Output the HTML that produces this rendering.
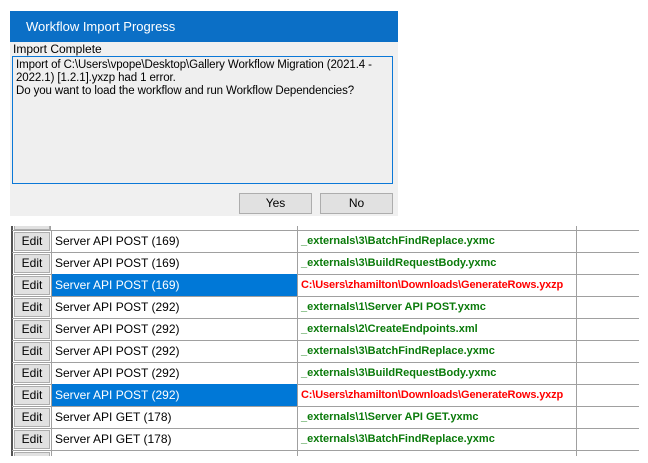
<!DOCTYPE html>
<html><head><style>
*{margin:0;padding:0;box-sizing:border-box}
body{width:648px;height:463px;background:#fff;position:relative;overflow:hidden;font-family:"Liberation Sans",sans-serif;font-size:12px;color:#000}
.a{position:absolute}
.dlg{left:10px;top:11px;width:388px;height:205px;background:#f0f0f0}
.title{left:10px;top:11px;width:388px;height:31px;background:#0b6fc6;color:#fff;font-size:13px;line-height:31px;padding-left:16px}
.ta{left:12px;top:56px;width:381px;height:128px;border:1px solid #0b78d7;background:#efefef;padding:2px 3px;line-height:13px;font-size:11.5px;white-space:nowrap;letter-spacing:-0.1px}
.btn{background:#e1e1e1;border:1px solid #adadad;text-align:center}
.row{left:12px;width:627px;height:22px}
.hl{position:absolute;left:0;right:0;height:1px;background:#a0a0a0}
.edit{position:absolute;left:2px;top:2px;width:36px;height:19px;background:#e1e1e1;border:1px solid #adadad;text-align:center;line-height:17px}
.c1{position:absolute;left:39px;top:0;width:246px;height:22px;line-height:23px;padding-left:3px;border-left:1px solid #a0a0a0}
.c2{position:absolute;left:285px;top:0;width:280px;height:22px;line-height:23px;padding-left:3px;border-left:1px solid #a0a0a0;font-weight:bold;color:#0a7a0a;font-size:11px;white-space:nowrap;overflow:hidden}
.c3{position:absolute;left:564px;top:0;width:1px;height:22px;background:#a0a0a0}
.sel{background:#0078d7;color:#fff}
.red{color:#f00;letter-spacing:-0.15px}
</style></head><body>
<div class="a dlg"></div>
<div class="a title">Workflow Import Progress</div>
<div class="a" style="left:13px;top:43px;line-height:13px">Import Complete</div>
<div class="a ta">Import of C:\Users\vpope\Desktop\Gallery Workflow Migration (2021.4 -<br>2022.1) [1.2.1].yxzp had 1 error.<br>Do you want to load the workflow and run Workflow Dependencies?</div>
<div class="a btn" style="left:239px;top:193px;width:73px;height:21px;line-height:19px">Yes</div>
<div class="a btn" style="left:320px;top:193px;width:73px;height:21px;line-height:19px">No</div>

<div class="a" style="left:11px;top:226px;width:2px;height:230px;background:#555"></div>
<div class="a" style="left:14px;top:226px;width:36px;height:4px;background:#e1e1e1;border:1px solid #adadad;border-top:none"></div>
<div class="a" style="left:50px;top:226px;width:1px;height:4px;background:#a0a0a0"></div>
<div class="a" style="left:297px;top:226px;width:1px;height:4px;background:#a0a0a0"></div>
<div class="a" style="left:576px;top:226px;width:1px;height:4px;background:#a0a0a0"></div>

<div class="a row" style="top:230px"><div class="hl" style="top:0"></div><div class="edit">Edit</div><div class="c1">Server API POST (169)</div><div class="c2">_externals\3\BatchFindReplace.yxmc</div><div class="c3"></div></div>
<div class="a row" style="top:252px"><div class="hl" style="top:0"></div><div class="edit">Edit</div><div class="c1">Server API POST (169)</div><div class="c2">_externals\3\BuildRequestBody.yxmc</div><div class="c3"></div></div>
<div class="a row" style="top:274px"><div class="hl" style="top:0"></div><div class="edit">Edit</div><div class="c1 sel">Server API POST (169)</div><div class="c2 red">C:\Users\zhamilton\Downloads\GenerateRows.yxzp</div><div class="c3"></div></div>
<div class="a row" style="top:296px"><div class="hl" style="top:0"></div><div class="edit">Edit</div><div class="c1">Server API POST (292)</div><div class="c2">_externals\1\Server API POST.yxmc</div><div class="c3"></div></div>
<div class="a row" style="top:318px"><div class="hl" style="top:0"></div><div class="edit">Edit</div><div class="c1">Server API POST (292)</div><div class="c2">_externals\2\CreateEndpoints.xml</div><div class="c3"></div></div>
<div class="a row" style="top:340px"><div class="hl" style="top:0"></div><div class="edit">Edit</div><div class="c1">Server API POST (292)</div><div class="c2">_externals\3\BatchFindReplace.yxmc</div><div class="c3"></div></div>
<div class="a row" style="top:362px"><div class="hl" style="top:0"></div><div class="edit">Edit</div><div class="c1">Server API POST (292)</div><div class="c2">_externals\3\BuildRequestBody.yxmc</div><div class="c3"></div></div>
<div class="a row" style="top:384px"><div class="hl" style="top:0"></div><div class="edit">Edit</div><div class="c1 sel">Server API POST (292)</div><div class="c2 red">C:\Users\zhamilton\Downloads\GenerateRows.yxzp</div><div class="c3"></div></div>
<div class="a row" style="top:406px"><div class="hl" style="top:0"></div><div class="edit">Edit</div><div class="c1">Server API GET (178)</div><div class="c2">_externals\1\Server API GET.yxmc</div><div class="c3"></div></div>
<div class="a row" style="top:428px"><div class="hl" style="top:0"></div><div class="edit">Edit</div><div class="c1">Server API GET (178)</div><div class="c2">_externals\3\BatchFindReplace.yxmc</div><div class="c3"></div></div>
<div class="a row" style="top:450px;height:6px;overflow:hidden"><div class="hl" style="top:0"></div><div class="edit">Edit</div><div class="c1"></div><div class="c2"></div><div class="c3"></div></div>
</body></html>
